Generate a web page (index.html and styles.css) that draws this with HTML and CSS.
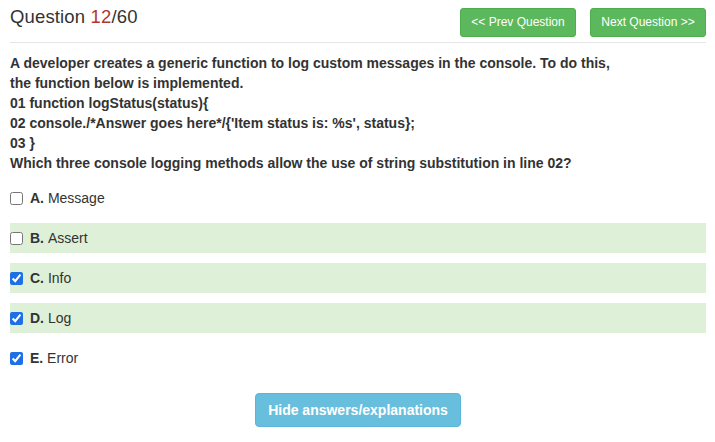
FILE: index.html
```html
<!DOCTYPE html>
<html>
<head>
<meta charset="utf-8">
<link rel="stylesheet" href="styles.css">
</head>
<body>
<div class="page">
  <div class="header">
    <h2 class="title">Question <span class="num">12</span>/60</h2>
    <div class="nav">
      <button class="btn btn-green">&lt;&lt; Prev Question</button>
      <button class="btn btn-green">Next Question &gt;&gt;</button>
    </div>
  </div>
  <div class="question">
    A developer creates a generic function to log custom messages in the console. To do this,<br>
    the function below is implemented.<br>
    01 function logStatus(status){<br>
    02 console./*Answer goes here*/{'Item status is: %s', status};<br>
    03 }<br>
    Which three console logging methods allow the use of string substitution in line 02?
  </div>
  <ul class="options">
    <li class="option"><input type="checkbox" class="cb"><span class="letter">A.</span>&nbsp;Message</li>
    <li class="option correct"><input type="checkbox" class="cb"><span class="letter">B.</span>&nbsp;Assert</li>
    <li class="option correct"><input type="checkbox" class="cb" checked><span class="letter">C.</span>&nbsp;Info</li>
    <li class="option correct"><input type="checkbox" class="cb" checked><span class="letter">D.</span>&nbsp;Log</li>
    <li class="option"><input type="checkbox" class="cb" checked><span class="letter">E.</span>&nbsp;Error</li>
  </ul>
  <div class="actions">
    <button class="btn btn-info">Hide answers/explanations</button>
  </div>
</div>
</body>
</html>
```
FILE: styles.css
```css
* { box-sizing: border-box; }
body {
  margin: 0;
  background: #fff;
  font-family: "Liberation Sans", Arial, Helvetica, sans-serif;
  color: #333;
}
.page {
  padding: 0 9px 0 10px;
}
.header {
  display: flex;
  justify-content: space-between;
  align-items: flex-start;
  height: 43px;
  padding-top: 7px;
  border-bottom: 1px solid #e5e5e5;
}
.title {
  margin: 0;
  font-size: 18.5px;
  letter-spacing: 0.15px;
  line-height: 20px;
  font-weight: normal;
  color: #333;
}
.num { color: #b0392c; }
.nav {
  display: flex;
  gap: 14px;
  margin-top: 1px;
}
.btn {
  font-family: "Liberation Sans", Arial, Helvetica, sans-serif;
  border-radius: 3px;
  color: #fff;
  cursor: pointer;
}
.btn-green {
  background: #5cb85c;
  border: 1px solid #4cae4c;
  font-size: 12px;
  line-height: 17px;
  height: 29px;
  width: 116px;
  padding: 0;
}
.question {
  margin-top: 10px;
  font-size: 14px;
  font-weight: bold;
  line-height: 20px;
}
.options {
  list-style: none;
  margin: 10px 0 0;
  padding: 0;
}
.option {
  display: flex;
  align-items: center;
  height: 30px;
  margin-bottom: 10px;
  font-size: 14px;
}
.option.correct { background: #dff0d8; }
.cb {
  width: 13px;
  height: 13px;
  margin: 0 7px 0 0;
  accent-color: #1f6fe5;
}
.letter { font-weight: bold; }
.actions {
  display: flex;
  justify-content: center;
  margin-top: 20px;
}
.btn-info {
  background: #68bfdd;
  border: 1px solid #5ab5d8;
  border-radius: 4px;
  font-size: 14px;
  font-weight: bold;
  height: 34px;
  width: 206px;
  padding: 0;
}
```
